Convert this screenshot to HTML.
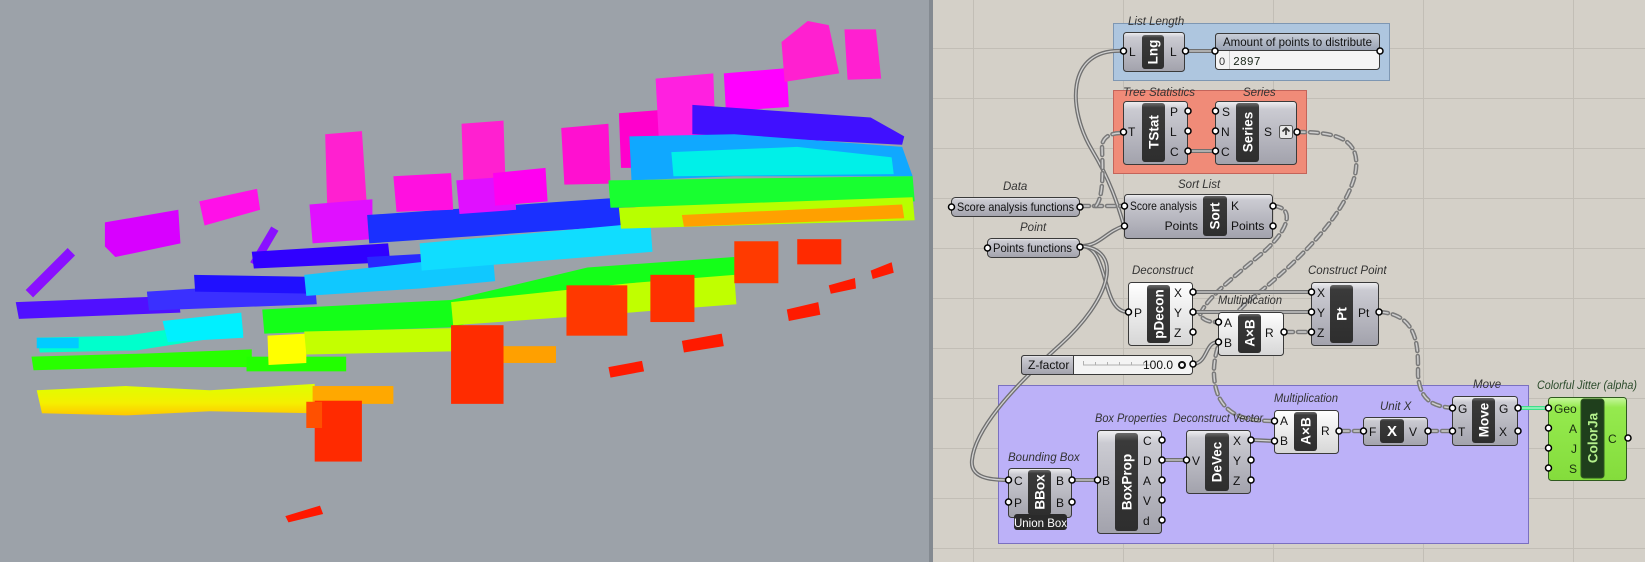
<!DOCTYPE html>
<html><head><meta charset="utf-8"><style>
html,body{margin:0;padding:0;background:#d4d0c8;overflow:hidden}
svg{display:block}
text{font-family:"Liberation Sans","DejaVu Sans",sans-serif}
.lb{font-size:11.5px;font-style:italic;fill:#333}
.pt{font-size:12px;fill:#111}
.nm{font-size:13.5px;font-weight:bold;fill:#fff}
.port{fill:#fff;stroke:#000;stroke-width:1.5}
.comp{stroke:#3a3a3a;stroke-width:1}
.wo{fill:none;stroke:#707070;stroke-width:4}
.wi{fill:none;stroke:#d2d2d2;stroke-width:1.3}
.do{fill:none;stroke:#7a7a7a;stroke-width:4.5;stroke-dasharray:8 5;stroke-linecap:round}
.di{fill:none;stroke:#cfcfcf;stroke-width:1.5;stroke-dasharray:8 5;stroke-linecap:round}
</style></head><body>
<svg width="1645" height="562" viewBox="0 0 1645 562" xmlns="http://www.w3.org/2000/svg">
<defs>
<linearGradient id="cg" x1="0" y1="0" x2="0" y2="1"><stop offset="0" stop-color="#f0f0f2"/><stop offset="0.12" stop-color="#cbcbd2"/><stop offset="1" stop-color="#a2a2ac"/></linearGradient>
<linearGradient id="lg" x1="0" y1="0" x2="0" y2="1"><stop offset="0" stop-color="#ffffff"/><stop offset="1" stop-color="#d6d6d6"/></linearGradient>
<linearGradient id="bk" x1="0" y1="0" x2="0" y2="1"><stop offset="0" stop-color="#6a6a6a"/><stop offset="0.08" stop-color="#3a3a3a"/><stop offset="1" stop-color="#2e2e2e"/></linearGradient>
<linearGradient id="gg" x1="0" y1="0" x2="0" y2="1"><stop offset="0" stop-color="#c8f7a0"/><stop offset="0.12" stop-color="#95ea4e"/><stop offset="1" stop-color="#84dc3c"/></linearGradient>
<linearGradient id="ph" x1="0" y1="0" x2="0" y2="1"><stop offset="0" stop-color="#c9cfd9"/><stop offset="1" stop-color="#98a1b2"/></linearGradient>
<linearGradient id="yb" x1="0" y1="0" x2="0" y2="1"><stop offset="0" stop-color="#ddff00"/><stop offset="0.6" stop-color="#f4f000"/><stop offset="1" stop-color="#ffc800"/></linearGradient>
</defs>

<rect x="0" y="0" width="929" height="562" fill="#9ca2a9"/>
<rect x="929" y="0" width="4" height="562" fill="#848a91"/>
<rect x="933" y="0" width="712" height="562" fill="#d4d0c8"/>

<g transform="scale(1.049)">
<polygon points="35,372 120,368 200,372 300,366 300,394 200,392 120,396 40,394" fill="url(#yb)"/>
<rect x="298" y="368" width="77" height="17" fill="#ffa800"/>
<rect x="300" y="382" width="45" height="58" fill="#ff2a00"/>
<rect x="292" y="383" width="15" height="25" fill="#ff5000"/>
<polygon points="272,492 305,482 308,490 275,498" fill="#ff1800"/>
<polygon points="30,340 140,337 240,333 240,350 140,350 32,353" fill="#28ff00"/>
<rect x="235" y="340" width="95" height="14" fill="#22ff00"/>
<polygon points="35,322 120,320 230,304 232,318 130,334 38,336" fill="#00ffcc"/>
<rect x="35" y="322" width="40" height="10" fill="#00ccff"/>
<polygon points="155,306 230,298 232,322 160,326" fill="#00f0ff"/>
<polygon points="15,288 170,282 172,298 18,304" fill="#5010ff"/>
<polygon points="140,278 300,268 302,290 142,296" fill="#3a30ff"/>
<polygon points="185,262 300,264 302,280 186,278" fill="#2010ff"/>
<line x1="28" y1="280" x2="68" y2="240" stroke="#8a10ff" stroke-width="10"/>
<line x1="242" y1="252" x2="262" y2="218" stroke="#8a10ff" stroke-width="8"/>
<polygon points="100,212 170,200 172,232 110,245 100,235" fill="#d800ff"/>
<polygon points="190,192 245,180 248,200 195,215" fill="#ff10e8"/>
<polygon points="310,128 345,125 350,200 312,200" fill="#ff20d0"/>
<polygon points="295,195 355,190 355,228 298,232" fill="#e010ff"/>
<polygon points="240,240 370,232 372,250 242,256" fill="#3000ff"/>
<polygon points="350,245 440,240 442,262 352,262" fill="#2828ff"/>
<polygon points="290,262 400,250 470,245 472,268 400,275 292,282" fill="#10c8ff"/>
<polygon points="350,205 640,185 642,212 352,232" fill="#1a30ff"/>
<polygon points="400,232 620,212 622,240 402,258" fill="#10ddff"/>
<polygon points="250,295 430,286 560,255 700,245 702,268 560,280 432,312 252,318" fill="#14ff18"/>
<polygon points="255,320 292,318 292,346 256,348" fill="#ffff00"/>
<polygon points="290,316 470,312 472,334 292,338" fill="#c4ff00"/>
<rect x="460" y="330" width="70" height="16" fill="#ffa000"/>
<polygon points="430,288 600,270 700,262 702,290 600,298 432,310" fill="#c0ff00"/>
<rect x="430" y="310" width="50" height="75" fill="#ff2c00"/>
<rect x="540" y="272" width="58" height="48" fill="#ff3800"/>
<rect x="620" y="262" width="42" height="45" fill="#ff3000"/>
<rect x="700" y="230" width="42" height="40" fill="#ff3a00"/>
<rect x="760" y="228" width="42" height="24" fill="#ff2a00"/>
<polygon points="580,350 612,344 614,354 582,360" fill="#ff1a00"/>
<polygon points="650,325 688,318 690,330 652,336" fill="#ff1a00"/>
<polygon points="750,295 780,288 782,300 752,306" fill="#ff1a00"/>
<polygon points="790,272 815,265 816,275 792,280" fill="#ff1a00"/>
<polygon points="830,258 850,250 852,260 832,266" fill="#ff1a00"/>
<polygon points="375,168 430,165 432,200 378,202" fill="#ff10e0"/>
<polygon points="440,118 480,115 482,180 442,180" fill="#ff20d0"/>
<polygon points="435,172 490,168 492,200 438,204" fill="#e010ff"/>
<polygon points="470,165 520,160 522,192 472,196" fill="#ff00f0"/>
<polygon points="535,122 580,118 582,175 538,176" fill="#ff10d0"/>
<polygon points="590,108 640,104 642,160 592,160" fill="#ff00cc"/>
<polygon points="625,75 680,70 682,130 628,132" fill="#ff20e0"/>
<polygon points="690,70 750,65 752,102 692,106" fill="#ff00ff"/>
<polygon points="745,40 770,20 790,24 800,70 748,78" fill="#ff20d0"/>
<polygon points="805,28 835,28 840,75 808,76" fill="#ff20d0"/>
<polygon points="660,100 830,112 862,130 860,138 660,128" fill="#4010ff"/>
<polygon points="600,130 700,128 860,140 870,168 700,168 602,172" fill="#10a8ff"/>
<polygon points="640,145 760,140 850,150 852,166 642,168" fill="#00f0e8"/>
<polygon points="580,172 870,168 872,192 582,198" fill="#18ff30"/>
<polygon points="590,198 870,188 872,210 592,218" fill="#b8ff00"/>
<polygon points="650,205 860,195 862,208 652,216" fill="#ffa000"/>
</g>

<g stroke="#c2beb6" stroke-width="1">
<line x1="973.5" y1="0" x2="973.5" y2="562"/><line x1="1123.5" y1="0" x2="1123.5" y2="562"/><line x1="1273.5" y1="0" x2="1273.5" y2="562"/><line x1="1423.5" y1="0" x2="1423.5" y2="562"/><line x1="1573.5" y1="0" x2="1573.5" y2="562"/>
<line x1="933" y1="48.5" x2="1645" y2="48.5"/><line x1="933" y1="98.5" x2="1645" y2="98.5"/><line x1="933" y1="148.5" x2="1645" y2="148.5"/><line x1="933" y1="198.5" x2="1645" y2="198.5"/><line x1="933" y1="248.5" x2="1645" y2="248.5"/><line x1="933" y1="298.5" x2="1645" y2="298.5"/><line x1="933" y1="348.5" x2="1645" y2="348.5"/><line x1="933" y1="398.5" x2="1645" y2="398.5"/><line x1="933" y1="448.5" x2="1645" y2="448.5"/><line x1="933" y1="498.5" x2="1645" y2="498.5"/><line x1="933" y1="548.5" x2="1645" y2="548.5"/>
</g>

<rect x="1113.5" y="23.5" width="276" height="57" fill="#aec6df" stroke="#7e97b3"/>
<rect x="1113.5" y="90.5" width="193" height="83" fill="#f08b78" stroke="#c4645a"/>
<rect x="998.5" y="385.5" width="530" height="158" fill="#bcb1f8" stroke="#7a70c0"/>

<g>
<path class="wo" d="M1123,51 C1065,48 1068,110 1092,150 C1110,180 1118,205 1124,226"/>
<path class="wi" d="M1123,51 C1065,48 1068,110 1092,150 C1110,180 1118,205 1124,226"/>
<path class="wo" d="M1081,246 C1100,246 1105,232 1124,226"/>
<path class="wi" d="M1081,246 C1100,246 1105,232 1124,226"/>
<path class="wo" d="M1081,246 C1110,246 1100,312 1128,312"/>
<path class="wi" d="M1081,246 C1110,246 1100,312 1128,312"/>
<path class="wo" d="M1081,246 C1125,250 1110,300 1060,345 C1010,390 975,430 972,460 C970,478 990,480 1008,480"/>
<path class="wi" d="M1081,246 C1125,250 1110,300 1060,345 C1010,390 975,430 972,460 C970,478 990,480 1008,480"/>
<path class="do" d="M1081,206 L1124,206"/>
<path class="di" d="M1081,206 L1124,206"/>
<path class="do" d="M1096,206 C1105,195 1102,160 1102,145 C1104,135 1113,133 1123,133"/>
<path class="di" d="M1096,206 C1105,195 1102,160 1102,145 C1104,135 1113,133 1123,133"/>
<path class="wo" d="M1186,51 L1215,51"/><path class="wi" d="M1186,51 L1215,51"/>
<path class="wo" d="M1189,151 L1215,151"/><path class="wi" d="M1189,151 L1215,151"/>
<path class="do" d="M1297,132 C1340,132 1362,140 1355,175 C1345,215 1300,260 1250,300 C1225,320 1205,360 1218,395 C1228,418 1250,421 1274,421"/>
<path class="di" d="M1297,132 C1340,132 1362,140 1355,175 C1345,215 1300,260 1250,300 C1225,320 1205,360 1218,395 C1228,418 1250,421 1274,421"/>
<path class="do" d="M1274,206 C1295,208 1290,230 1260,255 C1230,280 1205,300 1200,315 C1205,322 1212,322 1218,322"/>
<path class="di" d="M1274,206 C1295,208 1290,230 1260,255 C1230,280 1205,300 1200,315 C1205,322 1212,322 1218,322"/>
<path class="wo" d="M1194,292 L1311,292"/><path class="wi" d="M1194,292 L1311,292"/>
<path class="wo" d="M1194,312 L1311,312"/><path class="wi" d="M1194,312 L1311,312"/>
<path class="do" d="M1285,332 L1311,332"/><path class="di" d="M1285,332 L1311,332"/>
<path class="wo" d="M1194,364 C1208,362 1205,342 1218,342"/><path class="wi" d="M1194,364 C1208,362 1205,342 1218,342"/>
<path class="do" d="M1380,312 C1420,315 1418,350 1418,375 C1420,400 1432,406 1452,408"/>
<path class="di" d="M1380,312 C1420,315 1418,350 1418,375 C1420,400 1432,406 1452,408"/>
<path class="wo" d="M1072,480 L1097,480"/><path class="wi" d="M1072,480 L1097,480"/>
<path class="wo" d="M1163,460 L1186,460"/><path class="wi" d="M1163,460 L1186,460"/>
<path class="wo" d="M1253,440 L1274,441"/><path class="wi" d="M1253,440 L1274,441"/>
<path class="do" d="M1341,431 L1363,431"/><path class="di" d="M1341,431 L1363,431"/>
<path class="do" d="M1429,431 L1452,431"/><path class="di" d="M1429,431 L1452,431"/>
<path d="M1518,408 L1548,408" stroke="#3ee08a" stroke-width="4" fill="none"/>
<path d="M1518,408 L1548,408" stroke="#b8f5d0" stroke-width="1.2" fill="none"/>
</g>

<text class="lb" x="1128" y="25">List Length</text>
<text class="lb" x="1123" y="96">Tree Statistics</text>
<text class="lb" x="1243" y="96">Series</text>
<text class="lb" x="1003" y="190">Data</text>
<text class="lb" x="1178" y="188">Sort List</text>
<text class="lb" x="1020" y="231">Point</text>
<text class="lb" x="1132" y="274">Deconstruct</text>
<text class="lb" x="1308" y="274">Construct Point</text>
<text class="lb" x="1218" y="304" textLength="64" lengthAdjust="spacingAndGlyphs">Multiplication</text>
<text class="lb" x="1274" y="402" textLength="64" lengthAdjust="spacingAndGlyphs">Multiplication</text>
<text class="lb" x="1095" y="422" textLength="72" lengthAdjust="spacingAndGlyphs">Box Properties</text>
<text class="lb" x="1173" y="422" textLength="90" lengthAdjust="spacingAndGlyphs">Deconstruct Vector</text>
<text class="lb" x="1008" y="461">Bounding Box</text>
<text class="lb" x="1380" y="410">Unit X</text>
<text class="lb" x="1473" y="388">Move</text>
<text class="lb" x="1537" y="389" style="fill:#2a4a2a" textLength="100" lengthAdjust="spacingAndGlyphs">Colorful Jitter (alpha)</text>

<!-- Lng -->
<rect class="comp" x="1123.5" y="32.5" width="61" height="39" rx="3" fill="url(#cg)"/>
<rect x="1142" y="35" width="22" height="34" rx="3" fill="url(#bk)"/>
<text class="nm" transform="translate(1153,52) rotate(-90)" text-anchor="middle" dominant-baseline="central">Lng</text>
<text class="pt" x="1129" y="56">L</text><text class="pt" x="1170" y="56">L</text>
<circle class="port" cx="1123.5" cy="51" r="3"/><circle class="port" cx="1185.5" cy="51" r="3"/>

<!-- Panel -->
<rect x="1215.5" y="33.5" width="164" height="36" rx="3" fill="#f4f4f4" stroke="#3a3a3a"/>
<path d="M1215.5,50.5 V36.5 Q1215.5,33.5 1218.5,33.5 H1376.5 Q1379.5,33.5 1379.5,36.5 V50.5 Z" fill="url(#ph)" stroke="#3a3a3a"/>
<line x1="1229.5" y1="51" x2="1229.5" y2="69" stroke="#c8c8c8"/>
<text x="1223" y="46" style="font-size:12px;fill:#111" textLength="149" lengthAdjust="spacingAndGlyphs">Amount of points to distribute</text>
<text x="1219" y="65" style="font-size:11px;fill:#333">0</text>
<text x="1233" y="65" style="font-size:11.5px;fill:#1d2a1d;font-family:'Liberation Mono',monospace">2897</text>
<circle class="port" cx="1380" cy="51" r="3"/>
<circle class="port" cx="1215" cy="51" r="3"/>

<!-- TStat -->
<rect class="comp" x="1123.5" y="101.5" width="64" height="63" rx="3" fill="url(#cg)"/>
<rect x="1142" y="103" width="23" height="59" rx="3" fill="url(#bk)"/>
<text class="nm" transform="translate(1154,132) rotate(-90)" text-anchor="middle" dominant-baseline="central">TStat</text>
<text class="pt" x="1128" y="136">T</text>
<text class="pt" x="1170" y="116">P</text><text class="pt" x="1170" y="136">L</text><text class="pt" x="1170" y="156">C</text>
<circle class="port" cx="1123.5" cy="132" r="3"/>
<circle class="port" cx="1188" cy="111" r="3"/><circle class="port" cx="1188" cy="131" r="3"/><circle class="port" cx="1188" cy="151" r="3"/>

<!-- Series -->
<rect class="comp" x="1215.5" y="101.5" width="81" height="63" rx="3" fill="url(#cg)"/>
<rect x="1236" y="103" width="23" height="59" rx="3" fill="url(#bk)"/>
<text class="nm" transform="translate(1248,132) rotate(-90)" text-anchor="middle" dominant-baseline="central">Series</text>
<text class="pt" x="1222" y="116">S</text><text class="pt" x="1221" y="136">N</text><text class="pt" x="1221" y="156">C</text>
<text class="pt" x="1264" y="136">S</text>
<rect x="1279.5" y="125.5" width="13" height="13" rx="2" fill="#e8e8e8" stroke="#555"/>
<path d="M1286,135 V128.5 M1282.5,131.5 L1286,128 L1289.5,131.5" stroke="#333" stroke-width="1.6" fill="none"/>
<circle class="port" cx="1215.5" cy="111" r="3"/><circle class="port" cx="1215.5" cy="131" r="3"/><circle class="port" cx="1215.5" cy="151" r="3"/>
<circle class="port" cx="1297" cy="132" r="3"/>

<!-- Data param -->
<rect class="comp" x="951.5" y="197.5" width="128" height="19" rx="4" fill="url(#cg)"/>
<text x="957" y="211" style="font-size:12px;fill:#111" textLength="117" lengthAdjust="spacingAndGlyphs">Score analysis functions</text>
<circle class="port" cx="951.5" cy="207" r="3"/><circle class="port" cx="1080" cy="207" r="3"/>

<!-- Sort -->
<rect class="comp" x="1124.5" y="194.5" width="148" height="44" rx="3" fill="url(#cg)"/>
<rect x="1203" y="196" width="24" height="40" rx="3" fill="url(#bk)"/>
<text class="nm" transform="translate(1215,216) rotate(-90)" text-anchor="middle" dominant-baseline="central">Sort</text>
<text class="pt" x="1130" y="210" textLength="67" lengthAdjust="spacingAndGlyphs">Score analysis</text>
<text class="pt" x="1198" y="230" text-anchor="end">Points</text>
<text class="pt" x="1231" y="210">K</text><text class="pt" x="1231" y="230">Points</text>
<circle class="port" cx="1124.5" cy="206" r="3"/><circle class="port" cx="1124.5" cy="226" r="3"/>
<circle class="port" cx="1273" cy="206" r="3"/><circle class="port" cx="1273" cy="226" r="3"/>

<!-- Points functions param -->
<rect class="comp" x="987.5" y="238.5" width="92" height="19" rx="4" fill="url(#cg)"/>
<text x="993" y="252" style="font-size:12px;fill:#111" textLength="79" lengthAdjust="spacingAndGlyphs">Points functions</text>
<circle class="port" cx="987.5" cy="248" r="3"/><circle class="port" cx="1080" cy="247" r="3"/>

<!-- Deconstruct -->
<rect class="comp" x="1128.5" y="282.5" width="64" height="63" rx="3" fill="url(#lg)"/>
<rect x="1147" y="285" width="23" height="58" rx="3" fill="url(#bk)"/>
<text class="nm" transform="translate(1159,314) rotate(-90)" text-anchor="middle" dominant-baseline="central">pDecon</text>
<text class="pt" x="1134" y="317">P</text>
<text class="pt" x="1174" y="297">X</text><text class="pt" x="1174" y="317">Y</text><text class="pt" x="1174" y="337">Z</text>
<circle class="port" cx="1128.5" cy="312" r="3"/>
<circle class="port" cx="1193" cy="292" r="3"/><circle class="port" cx="1193" cy="312" r="3"/><circle class="port" cx="1193" cy="332" r="3"/>

<!-- Mult1 -->
<rect class="comp" x="1218.5" y="312.5" width="65" height="43" rx="3" fill="url(#lg)"/>
<rect x="1238" y="314" width="23" height="39" rx="3" fill="url(#bk)"/>
<text class="nm" transform="translate(1250,333) rotate(-90)" text-anchor="middle" dominant-baseline="central">A×B</text>
<text class="pt" x="1224" y="327">A</text><text class="pt" x="1224" y="347">B</text>
<text class="pt" x="1265" y="337">R</text>
<circle class="port" cx="1218.5" cy="322" r="3"/><circle class="port" cx="1218.5" cy="342" r="3"/><circle class="port" cx="1284" cy="332" r="3"/>

<!-- Construct Point -->
<rect class="comp" x="1311.5" y="282.5" width="67" height="63" rx="3" fill="url(#cg)"/>
<rect x="1330" y="285" width="23" height="58" rx="3" fill="url(#bk)"/>
<text class="nm" transform="translate(1342,314) rotate(-90)" text-anchor="middle" dominant-baseline="central">Pt</text>
<text class="pt" x="1317" y="297">X</text><text class="pt" x="1317" y="317">Y</text><text class="pt" x="1317" y="337">Z</text>
<text class="pt" x="1358" y="317">Pt</text>
<circle class="port" cx="1311.5" cy="292" r="3"/><circle class="port" cx="1311.5" cy="312" r="3"/><circle class="port" cx="1311.5" cy="332" r="3"/>
<circle class="port" cx="1379" cy="312" r="3"/>

<!-- Slider -->
<rect class="comp" x="1021.5" y="355.5" width="171" height="19" rx="3" fill="#f4f4f4"/>
<path d="M1073.5,355.5 H1024.5 Q1021.5,355.5 1021.5,358.5 V371.5 Q1021.5,374.5 1024.5,374.5 H1073.5 Z" fill="url(#cg)" stroke="#3a3a3a"/>
<text x="1028" y="369" style="font-size:12px;fill:#111">Z-factor</text>
<g stroke="#b0b0b0"><line x1="1083" y1="365" x2="1150" y2="365"/><line x1="1083.5" y1="361" x2="1083.5" y2="365"/><line x1="1095.5" y1="362" x2="1095.5" y2="365"/><line x1="1107.5" y1="362" x2="1107.5" y2="365"/><line x1="1119.5" y1="362" x2="1119.5" y2="365"/><line x1="1131.5" y1="362" x2="1131.5" y2="365"/><line x1="1143.5" y1="362" x2="1143.5" y2="365"/></g>
<text x="1173" y="369" text-anchor="end" style="font-size:12px;fill:#111">100.0</text>
<circle cx="1182" cy="365" r="3" fill="#fff" stroke="#111" stroke-width="2"/>
<circle class="port" cx="1193" cy="364" r="3"/>

<!-- BBox -->
<rect class="comp" x="1008.5" y="468.5" width="63" height="49" rx="3" fill="url(#cg)"/>
<rect x="1014" y="514" width="53" height="16" rx="3" fill="#2a2a2a"/>
<text x="1040.5" y="527" text-anchor="middle" style="font-size:11.5px;fill:#fff">Union Box</text>
<rect x="1028" y="470" width="23" height="45" rx="3" fill="url(#bk)"/>
<text class="nm" transform="translate(1040,492) rotate(-90)" text-anchor="middle" dominant-baseline="central">BBox</text>
<text class="pt" x="1014" y="485">C</text><text class="pt" x="1014" y="507">P</text>
<text class="pt" x="1056" y="485">B</text><text class="pt" x="1056" y="507">B</text>
<circle class="port" cx="1008.5" cy="480" r="3"/><circle class="port" cx="1008.5" cy="502" r="3"/>
<circle class="port" cx="1072" cy="480" r="3"/><circle class="port" cx="1072" cy="502" r="3"/>

<!-- BoxProp -->
<rect class="comp" x="1097.5" y="430.5" width="64" height="103" rx="3" fill="url(#cg)"/>
<rect x="1115" y="433" width="23" height="98" rx="3" fill="url(#bk)"/>
<text class="nm" transform="translate(1127,482) rotate(-90)" text-anchor="middle" dominant-baseline="central">BoxProp</text>
<text class="pt" x="1102" y="485">B</text>
<text class="pt" x="1143" y="445">C</text><text class="pt" x="1143" y="465">D</text><text class="pt" x="1143" y="485">A</text><text class="pt" x="1143" y="505">V</text><text class="pt" x="1143" y="525">d</text>
<circle class="port" cx="1097.5" cy="480" r="3"/>
<circle class="port" cx="1162" cy="440" r="3"/><circle class="port" cx="1162" cy="460" r="3"/><circle class="port" cx="1162" cy="480" r="3"/><circle class="port" cx="1162" cy="500" r="3"/><circle class="port" cx="1162" cy="520" r="3"/>

<!-- DeVec -->
<rect class="comp" x="1186.5" y="430.5" width="64" height="63" rx="3" fill="url(#cg)"/>
<rect x="1205" y="433" width="24" height="58" rx="3" fill="url(#bk)"/>
<text class="nm" transform="translate(1217,462) rotate(-90)" text-anchor="middle" dominant-baseline="central">DeVec</text>
<text class="pt" x="1192" y="465">V</text>
<text class="pt" x="1233" y="445">X</text><text class="pt" x="1233" y="465">Y</text><text class="pt" x="1233" y="485">Z</text>
<circle class="port" cx="1186.5" cy="460" r="3"/>
<circle class="port" cx="1251" cy="440" r="3"/><circle class="port" cx="1251" cy="460" r="3"/><circle class="port" cx="1251" cy="480" r="3"/>

<!-- Mult2 -->
<rect class="comp" x="1274.5" y="410.5" width="64" height="43" rx="3" fill="url(#lg)"/>
<rect x="1294" y="412" width="23" height="39" rx="3" fill="url(#bk)"/>
<text class="nm" transform="translate(1306,431) rotate(-90)" text-anchor="middle" dominant-baseline="central">A×B</text>
<text class="pt" x="1280" y="425">A</text><text class="pt" x="1280" y="445">B</text>
<text class="pt" x="1321" y="435">R</text>
<circle class="port" cx="1274.5" cy="421" r="3"/><circle class="port" cx="1274.5" cy="441" r="3"/><circle class="port" cx="1339" cy="431" r="3"/>

<!-- Unit X -->
<rect class="comp" x="1363.5" y="417.5" width="64" height="28" rx="3" fill="url(#cg)"/>
<rect x="1380" y="419" width="24" height="24" rx="3" fill="url(#bk)"/>
<text class="nm" x="1392" y="436" text-anchor="middle" style="font-size:15px">X</text>
<text class="pt" x="1369" y="436">F</text><text class="pt" x="1409" y="436">V</text>
<circle class="port" cx="1363.5" cy="431" r="3"/><circle class="port" cx="1428" cy="431" r="3"/>

<!-- Move -->
<rect class="comp" x="1452.5" y="396.5" width="65" height="49" rx="3" fill="url(#cg)"/>
<rect x="1472" y="398" width="23" height="45" rx="3" fill="url(#bk)"/>
<text class="nm" transform="translate(1484,420) rotate(-90)" text-anchor="middle" dominant-baseline="central">Move</text>
<text class="pt" x="1458" y="413">G</text><text class="pt" x="1458" y="436">T</text>
<text class="pt" x="1499" y="413">G</text><text class="pt" x="1499" y="436">X</text>
<circle class="port" cx="1452.5" cy="408" r="3"/><circle class="port" cx="1452.5" cy="431" r="3"/>
<circle class="port" cx="1518" cy="408" r="3"/><circle class="port" cx="1518" cy="431" r="3"/>

<!-- ColorJa -->
<rect x="1548.5" y="397.5" width="78" height="83" rx="3" fill="url(#gg)" stroke="#2e5a1e"/>
<rect x="1581" y="399" width="23" height="79" rx="3" fill="#1f3f1c" stroke="#2e5a1e"/>
<text class="nm" transform="translate(1593,438) rotate(-90)" text-anchor="middle" dominant-baseline="central" style="fill:#b4f08c">ColorJa</text>
<text class="pt" x="1554" y="413" style="fill:#1a2e10">Geo</text>
<text class="pt" x="1569" y="433" style="fill:#1a2e10">A</text><text class="pt" x="1571" y="453" style="fill:#1a2e10">J</text><text class="pt" x="1569" y="473" style="fill:#1a2e10">S</text>
<text class="pt" x="1608" y="443" style="fill:#1a2e10">C</text>
<circle class="port" cx="1548.5" cy="408" r="3"/><circle class="port" cx="1548.5" cy="428" r="3"/><circle class="port" cx="1548.5" cy="448" r="3"/><circle class="port" cx="1548.5" cy="468" r="3"/>
<circle class="port" cx="1628" cy="438" r="3"/>
</svg>
</body></html>
